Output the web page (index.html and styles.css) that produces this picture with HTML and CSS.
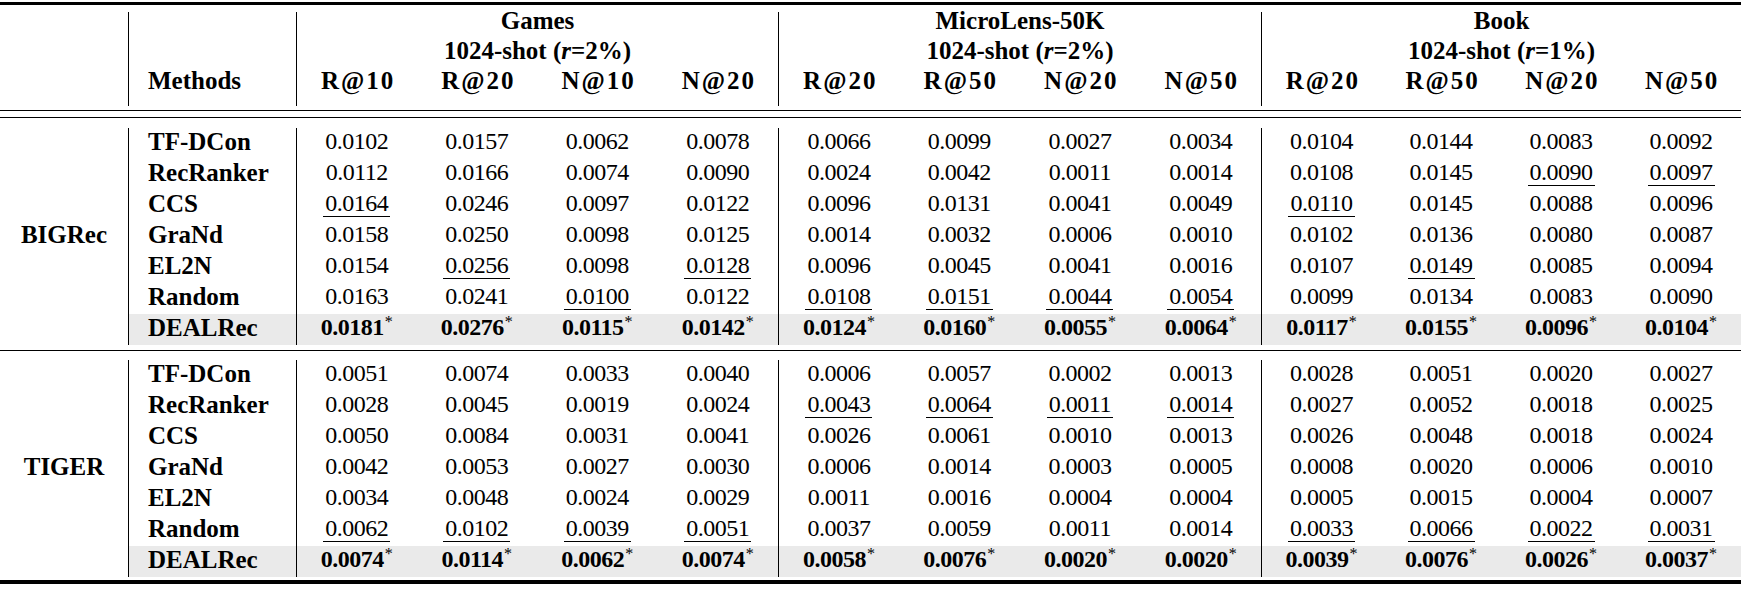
FILE: index.html
```html
<!DOCTYPE html>
<html>
<head>
<meta charset="utf-8">
<link rel="stylesheet" href="styles.css">
</head>
<body>
<div class="table">
  <div class="rule heavy top"></div>
  <div class="head">
    <div class="h-blank"></div>
    <div class="h-methods">Methods</div>
    <div class="group">
      <div class="g-title">Games</div>
      <div class="g-shot">1024-shot (<i>r</i>=2%)</div>
      <div class="g-metrics"><span>R@10</span><span>R@20</span><span>N@10</span><span>N@20</span></div>
    </div>
    <div class="group">
      <div class="g-title">MicroLens-50K</div>
      <div class="g-shot">1024-shot (<i>r</i>=2%)</div>
      <div class="g-metrics"><span>R@20</span><span>R@50</span><span>N@20</span><span>N@50</span></div>
    </div>
    <div class="group">
      <div class="g-title">Book</div>
      <div class="g-shot">1024-shot (<i>r</i>=1%)</div>
      <div class="g-metrics"><span>R@20</span><span>R@50</span><span>N@20</span><span>N@50</span></div>
    </div>
  </div>
  <div class="rule thin r1"></div>
  <div class="rule thin r2"></div>

  <div class="body b1">
    <div class="label">BIGRec</div>
    <div class="m">TF-DCon</div><div class="n s">0.0102</div><div class="n">0.0157</div><div class="n">0.0062</div><div class="n">0.0078</div><div class="n s">0.0066</div><div class="n">0.0099</div><div class="n">0.0027</div><div class="n">0.0034</div><div class="n s">0.0104</div><div class="n">0.0144</div><div class="n">0.0083</div><div class="n">0.0092</div>
    <div class="m">RecRanker</div><div class="n s">0.0112</div><div class="n">0.0166</div><div class="n">0.0074</div><div class="n">0.0090</div><div class="n s">0.0024</div><div class="n">0.0042</div><div class="n">0.0011</div><div class="n">0.0014</div><div class="n s">0.0108</div><div class="n">0.0145</div><div class="n"><span class="ul">0.0090</span></div><div class="n"><span class="ul">0.0097</span></div>
    <div class="m">CCS</div><div class="n s"><span class="ul">0.0164</span></div><div class="n">0.0246</div><div class="n">0.0097</div><div class="n">0.0122</div><div class="n s">0.0096</div><div class="n">0.0131</div><div class="n">0.0041</div><div class="n">0.0049</div><div class="n s"><span class="ul">0.0110</span></div><div class="n">0.0145</div><div class="n">0.0088</div><div class="n">0.0096</div>
    <div class="m">GraNd</div><div class="n s">0.0158</div><div class="n">0.0250</div><div class="n">0.0098</div><div class="n">0.0125</div><div class="n s">0.0014</div><div class="n">0.0032</div><div class="n">0.0006</div><div class="n">0.0010</div><div class="n s">0.0102</div><div class="n">0.0136</div><div class="n">0.0080</div><div class="n">0.0087</div>
    <div class="m">EL2N</div><div class="n s">0.0154</div><div class="n"><span class="ul">0.0256</span></div><div class="n">0.0098</div><div class="n"><span class="ul">0.0128</span></div><div class="n s">0.0096</div><div class="n">0.0045</div><div class="n">0.0041</div><div class="n">0.0016</div><div class="n s">0.0107</div><div class="n"><span class="ul">0.0149</span></div><div class="n">0.0085</div><div class="n">0.0094</div>
    <div class="m">Random</div><div class="n s">0.0163</div><div class="n">0.0241</div><div class="n"><span class="ul">0.0100</span></div><div class="n">0.0122</div><div class="n s"><span class="ul">0.0108</span></div><div class="n"><span class="ul">0.0151</span></div><div class="n"><span class="ul">0.0044</span></div><div class="n"><span class="ul">0.0054</span></div><div class="n s">0.0099</div><div class="n">0.0134</div><div class="n">0.0083</div><div class="n">0.0090</div>
    <div class="m hl">DEALRec</div><div class="n s hl b">0.0181<sup>*</sup></div><div class="n hl b">0.0276<sup>*</sup></div><div class="n hl b">0.0115<sup>*</sup></div><div class="n hl b">0.0142<sup>*</sup></div><div class="n s hl b">0.0124<sup>*</sup></div><div class="n hl b">0.0160<sup>*</sup></div><div class="n hl b">0.0055<sup>*</sup></div><div class="n hl b">0.0064<sup>*</sup></div><div class="n s hl b">0.0117<sup>*</sup></div><div class="n hl b">0.0155<sup>*</sup></div><div class="n hl b">0.0096<sup>*</sup></div><div class="n hl b">0.0104<sup>*</sup></div>
  </div>

  <div class="rule thin r3"></div>

  <div class="body b2">
    <div class="label">TIGER</div>
    <div class="m">TF-DCon</div><div class="n s">0.0051</div><div class="n">0.0074</div><div class="n">0.0033</div><div class="n">0.0040</div><div class="n s">0.0006</div><div class="n">0.0057</div><div class="n">0.0002</div><div class="n">0.0013</div><div class="n s">0.0028</div><div class="n">0.0051</div><div class="n">0.0020</div><div class="n">0.0027</div>
    <div class="m">RecRanker</div><div class="n s">0.0028</div><div class="n">0.0045</div><div class="n">0.0019</div><div class="n">0.0024</div><div class="n s"><span class="ul">0.0043</span></div><div class="n"><span class="ul">0.0064</span></div><div class="n"><span class="ul">0.0011</span></div><div class="n"><span class="ul">0.0014</span></div><div class="n s">0.0027</div><div class="n">0.0052</div><div class="n">0.0018</div><div class="n">0.0025</div>
    <div class="m">CCS</div><div class="n s">0.0050</div><div class="n">0.0084</div><div class="n">0.0031</div><div class="n">0.0041</div><div class="n s">0.0026</div><div class="n">0.0061</div><div class="n">0.0010</div><div class="n">0.0013</div><div class="n s">0.0026</div><div class="n">0.0048</div><div class="n">0.0018</div><div class="n">0.0024</div>
    <div class="m">GraNd</div><div class="n s">0.0042</div><div class="n">0.0053</div><div class="n">0.0027</div><div class="n">0.0030</div><div class="n s">0.0006</div><div class="n">0.0014</div><div class="n">0.0003</div><div class="n">0.0005</div><div class="n s">0.0008</div><div class="n">0.0020</div><div class="n">0.0006</div><div class="n">0.0010</div>
    <div class="m">EL2N</div><div class="n s">0.0034</div><div class="n">0.0048</div><div class="n">0.0024</div><div class="n">0.0029</div><div class="n s">0.0011</div><div class="n">0.0016</div><div class="n">0.0004</div><div class="n">0.0004</div><div class="n s">0.0005</div><div class="n">0.0015</div><div class="n">0.0004</div><div class="n">0.0007</div>
    <div class="m">Random</div><div class="n s"><span class="ul">0.0062</span></div><div class="n"><span class="ul">0.0102</span></div><div class="n"><span class="ul">0.0039</span></div><div class="n"><span class="ul">0.0051</span></div><div class="n s">0.0037</div><div class="n">0.0059</div><div class="n">0.0011</div><div class="n">0.0014</div><div class="n s"><span class="ul">0.0033</span></div><div class="n"><span class="ul">0.0066</span></div><div class="n"><span class="ul">0.0022</span></div><div class="n"><span class="ul">0.0031</span></div>
    <div class="m hl">DEALRec</div><div class="n s hl b">0.0074<sup>*</sup></div><div class="n hl b">0.0114<sup>*</sup></div><div class="n hl b">0.0062<sup>*</sup></div><div class="n hl b">0.0074<sup>*</sup></div><div class="n s hl b">0.0058<sup>*</sup></div><div class="n hl b">0.0076<sup>*</sup></div><div class="n hl b">0.0020<sup>*</sup></div><div class="n hl b">0.0020<sup>*</sup></div><div class="n s hl b">0.0039<sup>*</sup></div><div class="n hl b">0.0076<sup>*</sup></div><div class="n hl b">0.0026<sup>*</sup></div><div class="n hl b">0.0037<sup>*</sup></div>
  </div>

  <div class="rule heavy bottom"></div>
</div>
</body>
</html>
```

FILE: styles.css
```css
html, body {
  margin: 0;
  padding: 0;
  background: #ffffff;
}

body {
  font-family: "Liberation Serif", "Times New Roman", serif;
  font-size: 23px;
  color: #000000;
}

.table {
  width: 1741px;
  padding-top: 2px;
}

.rule {
  background: #000000;
}

.rule.heavy.top {
  height: 3px;
}

.rule.heavy.bottom {
  height: 4px;
  margin-top: 3px;
}

.rule.thin {
  height: 1px;
}

.rule.r1 { margin-top: 4px; }
.rule.r2 { margin-top: 6px; }
.rule.r3 { margin-top: 5px; }

/* ---------- header ---------- */
.head {
  display: grid;
  grid-template-columns: 128px 168px 482px 483px 480px;
  margin-top: 7px;
  height: 94px;
  font-weight: bold;
  font-size: 25px;
}

.h-methods {
  border-left: 1px solid #000;
  display: flex;
  align-items: flex-end;
  padding-left: 19px;
  padding-bottom: 10px;
  line-height: 30px;
}

.group {
  border-left: 1px solid #000;
  display: flex;
  flex-direction: column;
  text-align: center;
}

.g-title {
  height: 24px;
  line-height: 18px;
}

.g-shot {
  height: 30px;
  line-height: 30px;
}

.g-metrics {
  display: grid;
  grid-template-columns: repeat(4, 1fr);
  height: 30px;
  line-height: 30px;
}

.g-metrics span {
  letter-spacing: 2px;
  padding-left: 2px;
}

/* ---------- body ---------- */
.body {
  display: grid;
  grid-template-columns: 128px 168px repeat(4, 120.5px) repeat(4, 120.75px) repeat(4, 120px);
  grid-auto-rows: 31px;
}

.body.b1 { margin-top: 10px; }
.body.b2 { margin-top: 9px; }

.label {
  grid-column: 1;
  grid-row: 1 / span 7;
  display: flex;
  align-items: center;
  justify-content: center;
  font-weight: bold;
  font-size: 25px;
  padding-bottom: 4px;
}

.m {
  grid-column: 2;
  border-left: 1px solid #000;
  padding-left: 19px;
  font-weight: bold;
  font-size: 25px;
  line-height: 27px;
  padding-bottom: 4px;
}

.n {
  text-align: center;
  font-size: 24px;
  letter-spacing: -0.5px;
  line-height: 27px;
  padding-bottom: 4px;
}

.n.s {
  border-left: 1px solid #000;
}

.hl {
  background: #eaeaea;
}

.b {
  font-weight: bold;
}

.ul {
  border-bottom: 1px solid #000;
  padding: 0 2px;
}

sup {
  font-size: 16px;
  font-weight: normal;
  letter-spacing: 0;
  line-height: 0;
  vertical-align: 8px;
  margin-left: 1px;
}
```
